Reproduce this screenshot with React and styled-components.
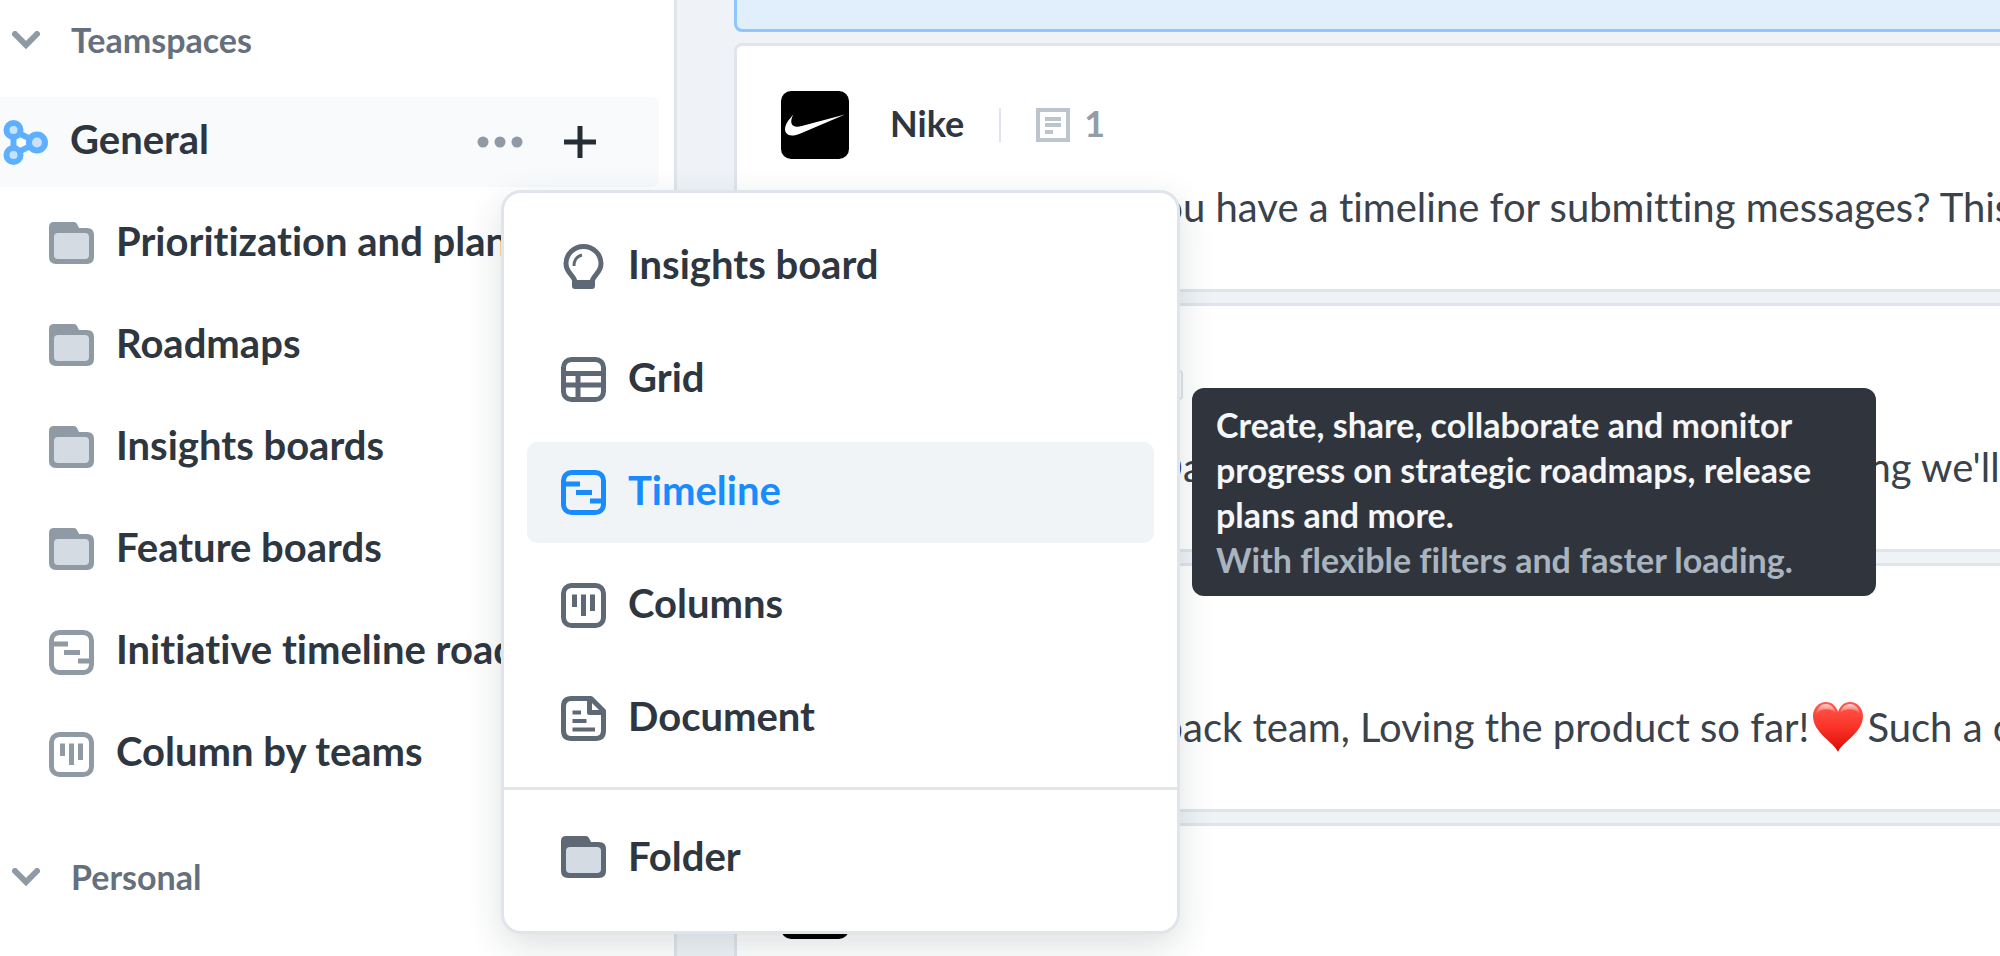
import React from "react";
import styled, { createGlobalStyle } from "styled-components";

const color = {
  ink: "#2e363f",
  muted: "#65707d",
  icon: "#8f9aa5",
  iconDark: "#5f6976",
  iconFill: "#d4dbe2",
  blue: "#188bff",
  line: "#dfe5ea",
  canvas: "#eff3f7",
};

const GlobalStyle = createGlobalStyle`
  *, *::before, *::after { box-sizing: border-box; }
  body {
    margin: 0;
    background: #fff;
    color: ${color.ink};
    font-family: Lato, "Open Sans", "Liberation Sans", sans-serif;
    font-size: 40px;
    font-variant-ligatures: none;
  }
  button { border: 0; margin: 0; padding: 0; background: none; font: inherit; color: inherit; cursor: pointer; }
  ul { list-style: none; margin: 0; padding: 0; }
  h2, p { margin: 0; }
  svg { display: block; flex: none; }
`;

const Page = styled.div`
  position: relative;
  display: flex;
  height: 100vh;
  overflow: hidden;
`;

const Sidebar = styled.nav`
  flex: none;
  width: 677px;
  border-right: 3px solid ${color.line};
  background: #fff;
`;

const SectionToggle = styled.button`
  display: flex;
  align-items: center;
  gap: 31px;
  width: 100%;
  height: 80px;
  padding-left: 12px;
  color: ${color.muted};
  font-size: 34px;
  font-weight: 700;
  line-height: 40px;
  text-align: left;
`;

const Tree = styled.ul`
  display: flex;
  flex-direction: column;
  gap: 12px;
  padding: 17px 15px 38px 0;
`;

const TreeRow = styled.li`
  display: flex;
  align-items: center;
  height: 90px;
  padding-left: ${(p) => (p.$nested ? 49 : 3)}px;
  padding-right: 62px;
  border-radius: 0 8px 8px 0;
  background: ${(p) => (p.$active ? "#f8fafc" : "transparent")};
  color: ${color.icon};
`;

const ItemLink = styled.a`
  display: flex;
  flex: 1;
  align-items: center;
  gap: 22px;
  min-width: 0;
  color: inherit;
  text-decoration: none;
`;

const Label = styled.span`
  padding-bottom: 6px;
  color: ${(p) => (p.$active ? color.blue : color.ink)};
  font-weight: 700;
  line-height: 48px;
  white-space: nowrap;
`;

const RowActions = styled.div`
  display: flex;
  align-items: center;
  gap: 40px;
`;

const Main = styled.main`
  flex: 1;
  display: flex;
  flex-direction: column;
  gap: 11px;
  min-width: 0;
  padding-left: 57px;
  overflow: hidden;
  background: ${color.canvas};
`;

const SelectedCard = styled.article`
  flex: none;
  height: 32px;
  width: 120%;
  border: 3px solid #8ec6ff;
  border-top: 0;
  border-radius: 0 0 8px 8px;
  background: #e1effd;
`;

const Card = styled.article`
  flex: none;
  width: 120%;
  height: 249px;
  padding: 44px;
  border: 3px solid ${color.line};
  border-radius: 8px;
  background: #fff;
`;

const CardHeader = styled.header`
  display: flex;
  align-items: center;
  width: 402px;
  height: 69px;
`;

const Logo = styled.span`
  display: grid;
  place-items: center;
  width: 68px;
  height: 68px;
  margin-right: 41px;
  border-radius: 10px;
  background: #000;
`;

const Company = styled.h2`
  padding-bottom: 4px;
  font-size: 36px;
  font-weight: 700;
  line-height: 44px;
`;

const Rule = styled.span`
  width: 2px;
  height: 34px;
  margin: 0 35px;
  background: ${color.line};
`;

const Count = styled.span`
  padding: 0 0 4px 14px;
  color: #929da8;
  font-size: 36px;
  font-weight: 700;
  line-height: 44px;
`;

const Tag = styled.span`
  width: 96px;
  height: 30px;
  margin-left: auto;
  border: 2px solid ${color.line};
  border-radius: 4px;
`;

const Message = styled.p`
  display: flex;
  align-items: center;
  padding-top: 20px;
  color: #3a424b;
  line-height: 56px;
  white-space: pre;
`;

const Lead = styled.span`
  flex: none;
  width: 402px;
  text-align: right;
`;

const Menu = styled.div`
  position: absolute;
  top: 190px;
  left: 501px;
  width: 679px;
  padding: 23px 0 22px;
  border: 3px solid ${color.line};
  border-radius: 20px;
  background: #fff;
  box-shadow: 0 12px 36px rgba(20, 40, 40, 0.14);
`;

const MenuGroup = styled.div`
  display: flex;
  flex-direction: column;
  gap: 12px;
  padding: 0 23px;
`;

const MenuItem = styled.button`
  display: flex;
  align-items: center;
  gap: 22px;
  height: 101px;
  padding-left: 34px;
  border-radius: 10px;
  background: ${(p) => (p.$active ? "#f0f4f7" : "transparent")};
  color: ${(p) => (p.$active ? color.blue : color.iconDark)};
`;

const Divider = styled.hr`
  height: 3px;
  margin: 18px 0;
  border: 0;
  background: ${color.line};
`;

const Tooltip = styled.div`
  position: absolute;
  top: 388px;
  left: 1192px;
  width: 684px;
  padding: 14px 24px;
  border-radius: 12px;
  background: #30353d;
  color: #f4f6f8;
  font-size: 34px;
  font-weight: 700;
  line-height: 45px;
`;

const TooltipNote = styled.p`
  color: #aab4bf;
`;

function Icon({ children, size = 45 }) {
  return (
    <svg width={size} height={size} viewBox={`0 0 ${size} ${size}`} fill="none" stroke="currentColor" strokeWidth="5" aria-hidden="true">
      {children}
    </svg>
  );
}

const Frame = () => <rect x="2.5" y="2.5" width="40" height="40" rx="8" />;

const FolderIcon = () => (
  <Icon>
    <path d="M5 0H25Q27 0 28 2L30 6H38Q45 6 45 13V35Q45 42 38 42H7Q0 42 0 35V5Q0 0 5 0Z" fill="currentColor" stroke="none" />
    <rect x="5" y="11" width="35" height="26" rx="4" fill={color.iconFill} stroke="none" />
  </Icon>
);

const TimelineIcon = () => (
  <Icon>
    <Frame />
    <path d="M4 14H19M15 22.5H31M29 31H42" />
  </Icon>
);

const ColumnsIcon = () => (
  <Icon>
    <Frame />
    <path d="M13.5 11.5V24M22.5 11.5V33M31.5 11.5V28" />
  </Icon>
);

const GridIcon = () => (
  <Icon>
    <Frame />
    <path d="M3 16.5H42M3 28H42M17 16.5V42" />
  </Icon>
);

const BulbIcon = () => (
  <Icon>
    <path d="M14 40L13.5 36C11 30 5 28 5 19.5A17.5 17 0 0 1 40 19.5C40 28 34 30 31.5 36L31 40" />
    <path d="M11 36H34V42Q34 45 31 45H14Q11 45 11 42Z" fill="currentColor" stroke="none" />
    <path d="M13 22Q13 13 21 11" strokeWidth="3" />
  </Icon>
);

const DocumentIcon = () => (
  <Icon>
    <path d="M10.5 2.5H30L42.5 15V34.5Q42.5 42.5 34.5 42.5H10.5Q2.5 42.5 2.5 34.5V10.5Q2.5 2.5 10.5 2.5Z" strokeLinejoin="round" />
    <path d="M28.5 3V16.5H42" strokeWidth="5" strokeLinejoin="round" />
    <path d="M11.5 16.5H20M11.5 25H25.5M11.5 33.5H34" strokeWidth="4" />
  </Icon>
);

const TeamIcon = () => (
  <Icon>
    <g stroke="#5cb0ff" strokeWidth="6">
      <path d="M10.5 10.5L34.5 22.5L10.5 34.5Z" fill="#fff" />
      <g fill="#c9e1fa">
        <circle cx="10.5" cy="10" r="7" />
        <circle cx="10.5" cy="35" r="7" />
        <circle cx="34" cy="22.5" r="8" />
      </g>
    </g>
  </Icon>
);

const Chevron = () => (
  <svg width="28" height="18" viewBox="0 0 28 18" fill="none" stroke={color.icon} strokeWidth="6" strokeLinecap="round" aria-hidden="true">
    <path d="M3 3L14 14L25 3" />
  </svg>
);

const MoreIcon = () => (
  <svg width="46" height="12" viewBox="0 0 46 12" fill={color.icon} aria-hidden="true">
    <circle cx="6" cy="6" r="5.5" />
    <circle cx="23" cy="6" r="5.5" />
    <circle cx="40" cy="6" r="5.5" />
  </svg>
);

const PlusIcon = () => (
  <svg width="34" height="34" viewBox="0 0 34 34" stroke="#262c33" strokeWidth="5" aria-hidden="true">
    <path d="M17 1V33M1 17H33" />
  </svg>
);

const NoteIcon = () => (
  <Icon size={34}>
    <g stroke="#bcc5ce" strokeWidth="4">
      <rect x="2" y="2" width="30" height="30" />
      <path d="M9 11H25M9 17H25M9 24H17" />
    </g>
  </Icon>
);

const Swoosh = () => (
  <svg width="60" height="60" viewBox="0 0 24 24" fill="#fff" aria-hidden="true">
    <path d="M24 7.8L6.442 15.276c-1.456.616-2.679.925-3.668.925-1.12 0-1.933-.392-2.437-1.177-.317-.504-.41-1.143-.28-1.918.13-.775.476-1.6 1.036-2.478.467-.71 1.232-1.643 2.297-2.8a6.122 6.122 0 00-.784 1.848c-.28 1.195-.028 2.072.756 2.632.373.261.886.392 1.54.392.522 0 1.11-.084 1.764-.252L24 7.8z" />
  </svg>
);

const HeartSvg = styled.svg`
  margin: 0 4px;
`;

const Heart = () => (
  <HeartSvg width="50" height="50" viewBox="0 0 50 50" role="img" aria-label="heart">
    <defs>
      <linearGradient id="heart" x1="0" y1="0" x2="0" y2="1">
        <stop offset="0" stopColor="#ff5a4d" />
        <stop offset="0.5" stopColor="#fb3328" />
        <stop offset="1" stopColor="#d90b02" />
      </linearGradient>
      <linearGradient id="shine" x1="0" y1="0" x2="0" y2="1">
        <stop offset="0" stopColor="#fff" stopOpacity="0.75" />
        <stop offset="1" stopColor="#fff" stopOpacity="0" />
      </linearGradient>
    </defs>
    <path d="M25 50C21 40 0 31 0 14C0 6 6 0 13 0C19 0 23 4 25 10C27 4 31 0 37 0C44 0 50 6 50 14C50 31 29 40 25 50Z" fill="url(#heart)" />
    <path d="M3 12C4 5 9 2 13 2C18 2 22 6 23 11C18 6 8 6 3 12Z" fill="url(#shine)" />
    <path d="M47 12C46 5 41 2 37 2C32 2 28 6 27 11C32 6 42 6 47 12Z" fill="url(#shine)" />
  </HeartSvg>
);

const treeItems = [
  { label: "Prioritization and planning", icon: FolderIcon },
  { label: "Roadmaps", icon: FolderIcon },
  { label: "Insights boards", icon: FolderIcon },
  { label: "Feature boards", icon: FolderIcon },
  { label: "Initiative timeline roadmap", icon: TimelineIcon },
  { label: "Column by teams", icon: ColumnsIcon },
];

const menuItems = [
  { label: "Insights board", icon: BulbIcon },
  { label: "Grid", icon: GridIcon },
  { label: "Timeline", icon: TimelineIcon, active: true },
  { label: "Columns", icon: ColumnsIcon },
  { label: "Document", icon: DocumentIcon },
];

function MenuEntry({ icon: Glyph, label, active }) {
  return (
    <MenuItem type="button" role="menuitem" $active={active}>
      <Glyph />
      <Label $active={active}>{label}</Label>
    </MenuItem>
  );
}

function Section({ name }) {
  return (
    <SectionToggle type="button" aria-expanded="true">
      <Chevron />
      {name}
    </SectionToggle>
  );
}

export default function App() {
  return (
    <>
      <GlobalStyle />
      <Page>
        <Sidebar>
          <Section name="Teamspaces" />
          <Tree>
            <TreeRow $active>
              <ItemLink href="#general">
                <TeamIcon />
                <Label>General</Label>
              </ItemLink>
              <RowActions>
                <button type="button" aria-label="More options"><MoreIcon /></button>
                <button type="button" aria-label="Add"><PlusIcon /></button>
              </RowActions>
            </TreeRow>
            {treeItems.map(({ label, icon: Glyph }) => (
              <TreeRow key={label} $nested>
                <ItemLink href="#board">
                  <Glyph />
                  <Label>{label}</Label>
                </ItemLink>
              </TreeRow>
            ))}
          </Tree>
          <Section name="Personal" />
        </Sidebar>

        <Main>
          <SelectedCard />
          <Card>
            <CardHeader>
              <Logo><Swoosh /></Logo>
              <Company>Nike</Company>
              <Rule />
              <NoteIcon />
              <Count>1</Count>
            </CardHeader>
            <Message>
              <Lead>Hello, do yo</Lead>
              u have a timeline for submitting messages? This would help
            </Message>
          </Card>
          <Card>
            <CardHeader>
              <Logo />
              <Tag />
            </CardHeader>
            <Message>
              <Lead>Hello, D</Lead>
              ark mode on the dashboards is something we'll
            </Message>
          </Card>
          <Card>
            <CardHeader>
              <Logo />
            </CardHeader>
            <Message>
              <Lead>Hello Feedb</Lead>
              ack team, Loving the product so far!
              <Heart />
              Such a cool
            </Message>
          </Card>
          <Card>
            <CardHeader>
              <Logo />
            </CardHeader>
          </Card>
        </Main>

        <Menu role="menu">
          <MenuGroup>
            {menuItems.map((item) => (
              <MenuEntry key={item.label} {...item} />
            ))}
          </MenuGroup>
          <Divider />
          <MenuGroup>
            <MenuEntry icon={FolderIcon} label="Folder" />
          </MenuGroup>
        </Menu>

        <Tooltip role="tooltip">
          <p>Create, share, collaborate and monitor progress on strategic roadmaps, release plans and more.</p>
          <TooltipNote>With flexible filters and faster loading.</TooltipNote>
        </Tooltip>
      </Page>
    </>
  );
}
